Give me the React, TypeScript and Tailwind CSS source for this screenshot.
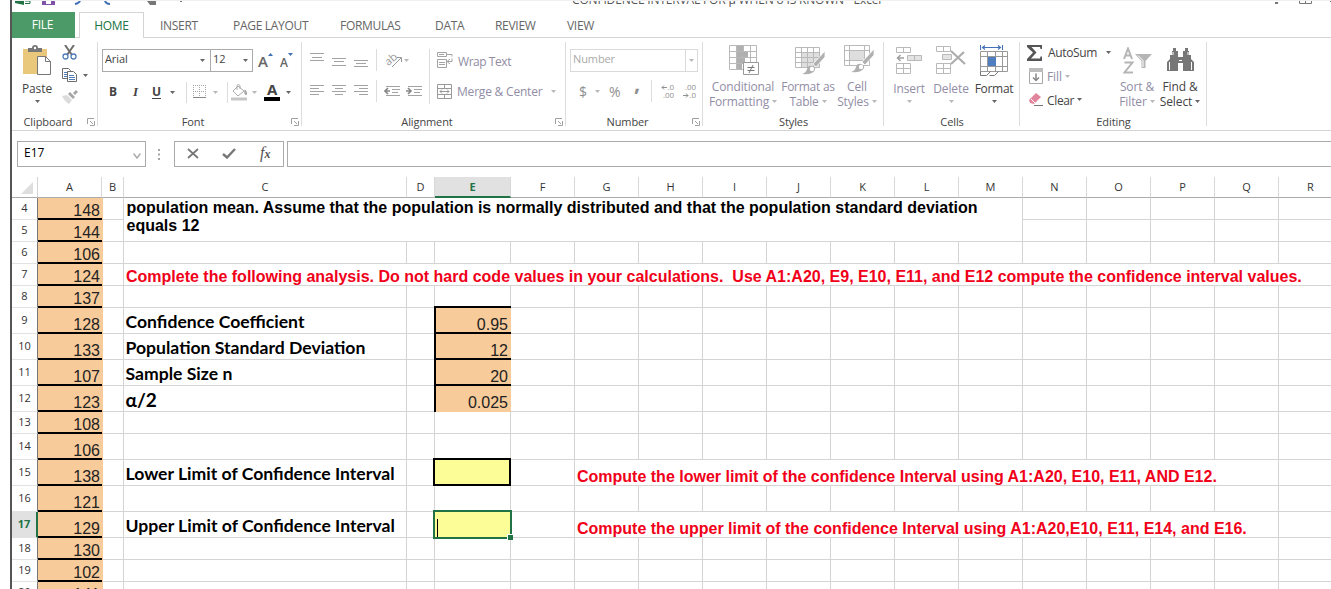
import React from 'react';
import clsx from 'clsx';

type Tone = 'dark' | 'muted';

const Arrow = ({ className, tone = 'dark' }: { className?: string; tone?: Tone }) => (
  <svg className={clsx('h-[3px] w-[5px] shrink-0', className)} viewBox="0 0 5 3">
    <path d="M0 0h5L2.5 3z" fill={tone === 'dark' ? '#666' : '#b8b8b8'} />
  </svg>
);

const Divider = ({ className }: { className?: string }) => (
  <div className={clsx('w-px shrink-0 bg-[#dcdcdc]', className)} />
);

const Launcher = () => (
  <svg className="absolute right-[3px] bottom-[4px] h-2 w-2" viewBox="0 0 8 8" fill="none" stroke="#a0a0a0">
    <path d="M.5 6V.5H7M3 3l3 3M7.5 3v4.5H3" />
  </svg>
);

// One ribbon section: tools on top, caption at the bottom
const Group = ({ title, className, titleClass, launcher, children }: {
  title: string;
  className: string;
  titleClass?: string;
  launcher?: boolean;
  children: React.ReactNode;
}) => (
  <section className={clsx('relative flex h-[92px] shrink-0 flex-col', className)}>
    <div className="h-[76px]">{children}</div>
    <div className={clsx('h-4 text-center text-[11px] leading-4 text-[#444]', titleClass)}>{title}</div>
    {launcher && <Launcher />}
    <div className="absolute top-1 right-0 h-[84px] w-px bg-[#dcdcdc]" />
  </section>
);

const Lines = ({ rows, className }: { rows: number[][]; className?: string }) => (
  <svg className={clsx('h-[14px] w-[14px] shrink-0', className)} viewBox="0 0 14 14">
    {rows.map(([x, y, w]) => (
      <rect key={y} x={x} y={y} width={w} height="1" fill="#a3a3a3" />
    ))}
  </svg>
);

const PasteIcon = () => (
  <svg className="h-[31px] w-[29px]" viewBox="0 0 29 31">
    <path d="M0 4h24v25H0z" fill="#e9c77b" />
    <path d="M5 7V3h4q0-3 3-3t3 3h4v4z" fill="#777" />
    <circle cx="12" cy="3" r="1.2" fill="#fff" />
    <path d="M14.500 11.500h8l5 5v13h-13z" fill="#fff" stroke="#777" />
    <path d="M22.500 11.500v5h5" fill="none" stroke="#777" />
  </svg>
);

const CutIcon = () => (
  <svg className="h-[15px] w-[15px]" viewBox="0 0 15 15" fill="none">
    <path d="M3 0l7 10M12 0L5 10" stroke="#6d6d6d" strokeWidth="2" />
    <circle cx="3.500" cy="11.500" r="2.500" stroke="#4f7db8" strokeWidth="1.300" />
    <circle cx="11.500" cy="11.500" r="2.500" stroke="#4f7db8" strokeWidth="1.300" />
  </svg>
);

const CopyIcon = () => (
  <svg className="h-[14px] w-[15px] shrink-0" viewBox="0 0 15 14" fill="#fff" stroke="#6d6d6d">
    <path d="M.5.5h6l2 2v8h-8z" />
    <path d="M2 4.500h4M2 6.500h3M2 8.500h3" stroke="#4f7db8" />
    <path d="M5.500 3.500h6l3 3v7h-9z" />
    <path d="M7 7.500h5M7 9.500h6M7 11.500h6" stroke="#4f7db8" />
  </svg>
);

const BrushIcon = () => (
  <svg className="h-[14px] w-[16px]" viewBox="0 0 16 14">
    <path d="M0 6l5-1 5 5-3 4q-4-2-7-8z" fill="#dcdcdc" />
    <path d="M6 4l2-2 5 5-2 2z" fill="#a5a5a5" />
    <path d="M11 3l3-3 2 2-3 3z" fill="#a5a5a5" />
  </svg>
);

const PaintOverlay = () => (
  <g>
    <path d="M30 6v6l-9 10-3-3z" fill="#b0b0b0" stroke="#fff" strokeWidth=".8" />
    <path d="M7 29q4-1 5-5 1-4 5-3 4 1 3 4-2 5-13 4z" fill="#b0b0b0" />
    <circle cx="17" cy="24" r="2.200" fill="#fff" />
  </g>
);

const ConditionalIcon = () => (
  <svg className="h-[31px] w-[31px]" viewBox="0 0 31 31">
    <path d="M.5.5h27v24H.5zM.5 6.500h27M.5 12.500h27M.5 18.500h27M7.500.5v24M14.500.5v24M21.500.5v24" fill="none" stroke="#b9b9b9" />
    <path d="M8 1h6v5H8zM8 7h11v5H8zM8 13h8v5H8zM8 19h5v5H8z" fill="#b0b0b0" />
    <path d="M14.500 17.500h15v12h-15z" fill="#fff" stroke="#999" />
    <path d="M18.500 22.500h7M18.500 25.500h7M24 20l-4 8" stroke="#777" fill="none" />
  </svg>
);

const TableIcon = () => (
  <svg className="h-[31px] w-[31px]" viewBox="0 0 31 31">
    <path d="M7 8h18v14H7z" fill="#dedede" />
    <path d="M.5 2.500h24v20H.5zM.5 7.500h24M.5 12.500h24M.5 17.500h24M6.500 2.500v20M12.500 2.500v20M18.500 2.500v20" fill="none" stroke="#b9b9b9" />
    <PaintOverlay />
  </svg>
);

const CellStylesIcon = () => (
  <svg className="h-[31px] w-[31px]" viewBox="0 0 31 31">
    <path d="M6 6h15v10H6z" fill="#dedede" />
    <path d="M.5.5h25v20H.5zM.5 5.500h25M.5 15.500h25M5.500.5v20M20.500.5v20" fill="none" stroke="#b9b9b9" />
    <g transform="translate(0 -2)"><PaintOverlay /></g>
  </svg>
);

const InsertIcon = () => (
  <svg className="h-[31px] w-[27px]" viewBox="0 0 27 31" fill="none" stroke="#b9b9b9">
    <path d="M.5 2.500h14v5H.5zM7.500 2.500v5M.5 18.500h14v10H.5zM7.500 18.500v10M.5 23.500h14" />
    <path d="M11.500 10.500h14v5h-14zM18.500 10.500v5" fill="#e4e4e4" />
    <path d="M2 13h6M4.500 10L1.500 13l3 3" stroke="#a0a0a0" strokeWidth="1.500" />
  </svg>
);

const DeleteIcon = () => (
  <svg className="h-[31px] w-[30px]" viewBox="0 0 30 31" fill="none" stroke="#b9b9b9">
    <path d="M.5 1.500h14v5H.5zM7.500 1.500v5M.5 18.500h14v10H.5zM7.500 18.500v10M.5 23.500h14" />
    <path d="M6.500 9.500h9v5h-9z" fill="#e4e4e4" />
    <path d="M15 6l14 13M28 7L15 19" stroke="#adadad" strokeWidth="2.200" />
  </svg>
);

const FormatIcon = () => (
  <svg className="h-[31px] w-[28px]" viewBox="0 0 28 31" fill="none">
    <path d="M.5 0v5M22.500 0v5M2 2.500h19M5 .5l-2.500 2L5 4.500M18 .5l2.500 2L18 4.500" stroke="#4472b4" strokeWidth="1.100" />
    <path d="M.5 6.500h27v20H.5zM.5 11.500h27M.5 21.500h27M7.500 6.500v20M15.500 6.500v20M22.500 6.500v20" stroke="#999" />
    <path d="M8 12h8v9H8z" fill="#4f7fbe" />
    <path d="M.5 26.500v4h6l4-4M9.500 30.500h5l4-4" stroke="#777" />
  </svg>
);

const SortIcon = () => (
  <svg className="h-[28px] w-[30px]" viewBox="0 0 30 28" fill="none" stroke="#b5b5b5" strokeWidth="2">
    <path d="M1 12L5 1.500 9 12M2.500 8.500h5M1.500 15.500h8L1.500 25.500h8.500" />
    <path d="M12 7h17l-6.500 7v7h-4v-7z" fill="#b5b5b5" stroke="none" />
    <path d="M15 8.500l5 5v6.500" stroke="#fff" strokeWidth="1" />
  </svg>
);

const FindIcon = () => (
  <svg className="h-[25px] w-[27px]" viewBox="0 0 27 25" fill="#777">
    <path d="M6 1h3v3h2v6h5V4h2V1h3v3h1v4h2v4l3 3v9H16v-8h-5v8H0v-9l3-3V8h2V4h1z" />
    <path d="M2.500 15v8M24.500 15v8M6 5v3M21 5v3M12 13.500h3" stroke="#fff" fill="none" />
  </svg>
);

// Big ribbon button with up to two lines of text
const BigButton = ({ icon, lines, className, tone = 'muted' }: {
  icon: React.ReactNode;
  lines: string[];
  className: string;
  tone?: Tone;
}) => (
  <div className={clsx('flex shrink-0 flex-col items-center pt-[7px] text-[12px]', className, tone === 'dark' ? 'text-[#444]' : 'text-[#918da5]')}>
    <div className="h-[34px]">{icon}</div>
    {lines.length === 2 ? (
      <>
        <div className="h-[15px] leading-[16px] whitespace-nowrap">{lines[0]}</div>
        <div className="flex h-[15px] items-center gap-[3px] leading-[15px] whitespace-nowrap">
          {lines[1]}
          <Arrow tone={tone} />
        </div>
      </>
    ) : (
      <>
        <div className="mt-0.5 h-[15px] leading-[16px]">{lines[0]}</div>
        <Arrow tone={tone} className="mt-[4px]" />
      </>
    )}
  </div>
);

const tabs = [
  { label: 'INSERT', className: 'ml-4 w-[73px]' },
  { label: 'PAGE LAYOUT', className: 'w-[107px]' },
  { label: 'FORMULAS', className: 'w-[95px]' },
  { label: 'DATA', className: 'w-[60px]' },
  { label: 'REVIEW', className: 'w-[72px]' },
  { label: 'VIEW', className: 'w-[60px]' },
];

const TitleBar = () => (
  <div className="flex h-3 overflow-hidden border-t border-[#f0f0f0]">
    <svg className="h-[5px] w-[170px] shrink-0" viewBox="0 0 170 5">
      <path d="M3 0h9v4L3 2z" fill="#217346" />
      <path d="M13 0h5v2.500h-5" fill="none" stroke="#217346" />
      <path d="M30 0h13v4H30z" fill="#8053a8" />
      <path d="M34 0h5v3h-5z" fill="#fff" />
      <path d="M68 0q-1 2-5 3M93 0q1 3 5 3" fill="none" stroke="#3f6fb5" strokeWidth="2" />
      <path d="M135 0h9v4h-6z" fill="#777" />
      <path d="M168 0h2v1h-2z" fill="#777" />
    </svg>
    <div className="-mt-[10px] ml-[390px] w-[640px] text-[12px] leading-[18px] tracking-[-0.17px] whitespace-nowrap text-[#555]">
      CONFIDENCE INTERVAL FOR μ WHEN δ IS KNOWN - Excel
    </div>
    <svg className="ml-[63px] h-[4px] w-[56px] shrink-0" viewBox="0 0 56 4">
      <path d="M0 1h3v2H0z" fill="#777" />
      <path d="M24.500 0v2.500h12V0M30.500 0v2.500" fill="none" stroke="#777" />
      <path d="M55 0h1v1h-1z" fill="#777" />
    </svg>
  </div>
);

const Tabs = () => (
  <nav className="flex h-[26px] text-[12px] leading-[27px] tracking-[-0.3px] text-[#666]">
    <div className="w-[63px] bg-[#4b9a68] pr-0.5 text-center leading-[26px] text-white">FILE</div>
    <div className="w-1 border-b border-[#d4d4d4]" />
    <div className="w-[65px] border-x border-t border-[#d4d4d4] text-center leading-[26px] text-[#217346]">HOME</div>
    <div className="flex grow border-b border-[#d4d4d4]">
      {tabs.map((tab) => (
        <span key={tab.label} className={tab.className}>{tab.label}</span>
      ))}
    </div>
  </nav>
);

const Ribbon = () => (
  <div className="flex h-[93px] border-b border-[#d4d4d4] tracking-[-0.1px]">
    <Group title="Clipboard" className="w-[86px]" titleClass="pr-3.5" launcher>
      <div className="flex">
        <div className="flex w-[50px] flex-col items-center pt-[7px]">
          <div className="h-[36px]"><PasteIcon /></div>
          <span className="text-[12px] leading-[15px] text-[#444]">Paste</span>
          <Arrow className="mt-1" />
        </div>
        <div className="flex flex-col gap-2 pt-[7px]">
          <CutIcon />
          <div className="flex items-center gap-1.5"><CopyIcon /><Arrow /></div>
          <BrushIcon />
        </div>
      </div>
    </Group>

    <Group title="Font" className="w-[204px]" titleClass="pr-3.5" launcher>
      <div className="flex h-[34px] pt-[11px] pl-1 text-[12px] text-[#444]">
        <div className="flex h-[23px] w-[109px] items-center justify-between border border-[#ababab] pr-[5px] pl-0.5">
          <span className="mb-1 text-[11px] leading-4">Arial</span><Arrow />
        </div>
        <div className="-ml-px flex h-[23px] w-[43px] items-center justify-between border border-[#ababab] pr-1 pl-0.5">
          <span className="mb-1 text-[11px] leading-4">12</span><Arrow />
        </div>
        <div className="ml-[5px] flex w-[22px] text-[15px] leading-[25px] font-semibold text-[#666]">A<svg className="mt-1 h-[3px] w-[5px]" viewBox="0 0 5 3"><path d="M0 3h5L2.500 0z" fill="#3f6fb5" /></svg></div>
        <div className="flex text-[12px] leading-[27px] font-semibold text-[#666]">A<svg className="mt-1 h-[3px] w-[5px]" viewBox="0 0 5 3"><path d="M0 0h5L2.500 3z" fill="#3f6fb5" /></svg></div>
      </div>
      <div className="mt-[9px] flex h-[22px] items-center text-[12px] font-bold text-[#444]">
        <span className="ml-[11px] w-[20px]">B</span>
        <span className="ml-[4px] w-[18px] font-['Liberation_Serif',serif] text-[13px] italic">I</span>
        <span className="ml-px w-[13px] underline underline-offset-2">U</span>
        <Arrow className="ml-[5px]" />
        <Divider className="ml-[11px] h-[21px]" />
        <svg className="ml-[6px] h-[14px] w-[14px]" viewBox="0 0 14 14" fill="none" stroke="#a8a8a8">
          <path d="M0 .5h13M0 6.500h13M.5 0v12M6.500 0v12M12.500 0v12" strokeDasharray="1 1" />
          <path d="M0 12.500h13" stroke="#888" />
        </svg>
        <Arrow tone="muted" className="ml-1.5" />
        <Divider className="ml-[9px] h-[21px]" />
        <svg className="ml-[3px] h-[17px] w-[17px]" viewBox="0 0 17 17" fill="none" stroke="#aaa">
          <path d="M7 2l6 5-6 5-5-5zM6 6V1.500q1-2 3 0V5" />
          <path d="M14 6q3 3 1 5-2-1-1-5z" fill="#aaa" />
          <path d="M0 13.500h16v3H0z" fill="#c6c6c6" stroke="none" />
        </svg>
        <Arrow tone="muted" className="ml-1" />
        <div className="ml-[7px] flex h-[17px] w-4 flex-col items-center border-b-4 border-black text-[15px] leading-[11px] font-bold">A</div>
        <Arrow className="ml-[6px]" />
      </div>
    </Group>

    <Group title="Alignment" className="w-[264px]" titleClass="pr-3.5" launcher>
      <div className="relative flex h-[75px] flex-col pl-2">
        <div className="mt-[11px] flex h-[22px] items-center">
          <Lines rows={[[0, 0, 14], [2, 4, 10], [0, 7, 14]]} />
          <Lines className="ml-2" rows={[[0, 5, 14], [2, 8, 10], [0, 12, 14]]} />
          <Lines className="ml-2" rows={[[0, 7, 14], [2, 10, 10], [0, 13, 14]]} />
          <Divider className="ml-2 h-[22px]" />
          <svg className="ml-[9px] h-[16px] w-[17px]" viewBox="0 0 17 16" fill="none" stroke="#999">
            <text x="-1" y="11" fontSize="11" fill="#999" stroke="none" transform="rotate(-40 5 8)">ab</text>
            <path d="M6 15L15 6M11 5.500h4.500V10" />
          </svg>
          <Arrow tone="muted" className="ml-px" />
          <svg className="ml-7 h-[16px] w-[16px]" viewBox="0 0 16 16" fill="none" stroke="#a3a3a3">
            <path d="M.5.5h9v4h-9zM2 2.500h5M.5 7.500h9v8h-9zM2 10.500h6M2 12.500h6M10 2.500h5v2M15 6.500v3h-4M13 7l-3 2.500 3 2.500" />
          </svg>
          <span className="mt-[3px] ml-[5px] text-[12px] tracking-[-0.45px] text-[#918da5]">Wrap Text</span>
        </div>
        <div className="mt-[9px] flex h-[22px] items-center">
          <Lines rows={[[0, 1, 14], [0, 4, 9], [0, 7, 14], [0, 10, 9]]} />
          <Lines className="ml-2" rows={[[0, 1, 14], [3, 4, 8], [0, 7, 14], [3, 10, 8]]} />
          <Lines className="ml-2" rows={[[0, 1, 14], [5, 4, 9], [0, 7, 14], [5, 10, 9]]} />
          <Divider className="ml-2 h-[22px]" />
          {['M6 6H1M4 3L1 6l3 3', 'M0 6h5M2 3l3 3-3 3'].map((d, i) => (
            <svg key={d} className={clsx('h-3 w-4', i === 0 ? 'ml-[7px]' : 'ml-[6px]')} viewBox="0 0 16 12" fill="none" stroke="#a3a3a3">
              <path d="M2 1.500h14M8 4.500h8M8 7.500h6M2 10.500h14" />
              <path d={d} stroke="#888" strokeWidth="1.600" />
            </svg>
          ))}
          <svg className="ml-[15px] h-[15px] w-[15px]" viewBox="0 0 15 15" fill="none" stroke="#999">
            <path d="M.5.5h14v14H.5zM.5 4.500h14M.5 10.500h14M7.500.5v4M7.500 10.500v4M3 7.500h9M5 5.500l-2 2 2 2M10 5.500l2 2-2 2" />
          </svg>
          <span className="mt-px ml-[5px] w-[92px] text-[12px] tracking-[-0.2px] whitespace-nowrap text-[#918da5]">Merge & Center</span>
          <Arrow tone="muted" className="ml-0.5" />
        </div>
        <Divider className="absolute top-[11px] left-[127px] h-[55px]" />
      </div>
    </Group>

    <Group title="Number" className="w-[137px]" titleClass="pr-3.5" launcher>
      <div className="pt-[11px] pl-1">
        <div className="flex h-[23px] w-[128px] justify-between border border-[#dadada] text-[11px] leading-[18px] text-[#aaa]">
          <span className="pl-0.5">Number</span>
          <div className="flex w-[12px] items-center justify-center border-l border-[#dadada]"><Arrow tone="muted" /></div>
        </div>
      </div>
      <div className="mt-2 flex h-[22px] items-center text-[14px] text-[#8f8f8f]">
        <span className="ml-[13px] w-[10px]">$</span>
        <Arrow tone="muted" className="ml-1.5" />
        <span className="ml-[9px] w-[14px]">%</span>
        <span className="ml-[11px] h-[22px] w-[6px] text-[22px] leading-[4px] font-bold">,</span>
        <Divider className="ml-[11px] h-[22px]" />
        <div className="ml-[7px] flex h-[16px] w-[15px] flex-col items-end text-[8px] leading-[8px]">
          <div className="flex items-center">
            <svg className="h-[5px] w-[7px]" viewBox="0 0 7 5" fill="none" stroke="#8f8f8f"><path d="M6 2.500H1M3 .5l-2 2 2 2" /></svg>
            .0
          </div>
          <div>.00</div>
        </div>
        <div className="ml-[7px] flex h-[16px] w-[15px] flex-col items-end text-[8px] leading-[8px]">
          <div>.00</div>
          <div className="flex items-center">
            <svg className="h-[5px] w-[7px]" viewBox="0 0 7 5" fill="none" stroke="#8f8f8f"><path d="M0 2.500h5M3 .5l2 2-2 2" /></svg>
            .0
          </div>
        </div>
      </div>
    </Group>

    <Group title="Styles" className="w-[181px]">
      <div className="flex pl-[5px]">
        <BigButton className="w-[70px] tracking-[-0.15px]" icon={<div className="pl-0.5"><ConditionalIcon /></div>} lines={['Conditional', 'Formatting']} />
        <BigButton className="w-[60px] tracking-[-0.25px]" icon={<div className="pl-1"><TableIcon /></div>} lines={['Format as', 'Table']} />
        <BigButton className="w-[38px]" icon={<div className="pl-1"><CellStylesIcon /></div>} lines={['Cell', 'Styles']} />
      </div>
    </Group>

    <Group title="Cells" className="w-[136px]">
      <div className="flex pl-[4px]">
        <BigButton className="w-[42px]" icon={<InsertIcon />} lines={['Insert']} />
        <BigButton className="w-[42px]" icon={<DeleteIcon />} lines={['Delete']} />
        <BigButton className="w-[44px] tracking-[-0.3px]" icon={<FormatIcon />} lines={['Format']} tone="dark" />
      </div>
    </Group>

    <Group title="Editing" className="w-[187px]">
      <div className="flex text-[12px] text-[#444]">
        <div className="flex w-[96px] flex-col pt-[3px] pl-[7px]">
          <div className="flex h-[23px] items-center">
            <svg className="h-4 w-[15px]" viewBox="0 0 15 16" fill="#555"><path d="M0 0h15v4h-1.500L13 2H4.500l5 5.500L4 13.500h9l.5-2H15V16H0v-2l6-6.500L0 2z" /></svg>
            <span className="mt-px ml-[6px] w-[52px] tracking-[-0.35px]">AutoSum</span>
            <Arrow className="ml-1.5" />
          </div>
          <div className="flex h-[24px] items-center text-[#918da5]">
            <svg className="ml-0.5 h-4 w-[14px]" viewBox="0 0 14 16" fill="none" stroke="#a8a8a8"><path d="M.5.5h13v15H.5z" /><path d="M0 0h14v4H0z" fill="#bdbdbd" stroke="none" /><path d="M7 5.500v7M4 9.500l3 3 3-3" stroke="#888" strokeWidth="1.500" /></svg>
            <span className="mt-0.5 ml-1">Fill</span>
            <Arrow tone="muted" className="ml-[3px]" />
          </div>
          <div className="flex h-[23px] items-center">
            <svg className="ml-0.5 h-[13px] w-[14px]" viewBox="0 0 14 13"><path d="M7 0l5 4-7 7-4-1-1-3z" fill="#e0859b" /><path d="M2 6l4 4" stroke="#fff" /><path d="M5 12.500h9" stroke="#777" /></svg>
            <span className="mt-0.5 ml-1 tracking-[-0.35px]">Clear</span>
            <Arrow className="ml-[3px]" />
          </div>
        </div>
        <BigButton className="w-[42px]" icon={<div className="pt-0.5 pl-0.5"><SortIcon /></div>} lines={['Sort &', 'Filter']} />
        <BigButton className="w-[44px]" icon={<div className="pt-0.5"><FindIcon /></div>} lines={['Find &', 'Select']} tone="dark" />
      </div>
    </Group>
  </div>
);

const FormulaBar = () => (
  <div className="flex h-[46px] pt-[10px] pl-[5px]">
    <div className="flex h-[26px] w-[129px] shrink-0 justify-between border border-[#ababab] pr-1 pl-1.5 text-[12px] leading-[22px] text-black">
      E17
      <svg className="mt-[11px] h-[6px] w-[8px]" viewBox="0 0 8 6" fill="none" stroke="#aaa" strokeWidth="1.500"><path d="M.5.5L4 5 7.500.5" /></svg>
    </div>
    <svg className="mt-2 ml-3 h-[11px] w-[2px]" viewBox="0 0 2 11" fill="#a5a5a5"><path d="M0 0h2v2H0zM0 4.500h2v2H0zM0 9h2v2H0z" /></svg>
    <div className="ml-[14px] flex h-[26px] w-[110px] shrink-0 items-center border border-[#ababab] pb-0.5">
      <svg className="ml-3 h-[11px] w-[12px]" viewBox="0 0 12 11" stroke="#777" strokeWidth="1.700"><path d="M1 1l10 9M11 1L1 10" /></svg>
      <svg className="ml-[23px] h-[11px] w-[14px]" viewBox="0 0 14 11" fill="none" stroke="#777" strokeWidth="2.400"><path d="M1 6l4 3.500L13 1" /></svg>
      <span className="ml-[24px] font-['Liberation_Serif',serif] text-[16px] leading-none text-[#555] italic">f<span className="text-[12px] font-bold">x</span></span>
    </div>
    <div className="ml-[3px] h-[26px] grow border border-r-0 border-[#ababab]" />
  </div>
);

type Cell = { text?: string; span?: string; kind?: 'label' | 'note' | 'input' | 'answer' | 'active' | 'merged' };
type Row = { n: number; a: string; tall?: boolean; cells: Cell[] };

const blank = (count: number): Cell[] => Array.from({ length: count }, () => ({}));

const rows: Row[] = [
  {
    n: 4, a: '148',
    cells: [{ kind: 'merged', span: 'col-span-11 row-span-2', text: 'population mean. Assume that the population is normally distributed and that the population standard deviation equals 12' }, ...blank(5)],
  },
  { n: 5, a: '144', cells: blank(5) },
  { n: 6, a: '106', cells: blank(16) },
  {
    n: 7, a: '124',
    cells: [{ kind: 'note', span: 'col-span-16', text: 'Complete the following analysis. Do not hard code values in your calculations.  Use A1:A20, E9, E10, E11, and E12 compute the confidence interval values.' }],
  },
  { n: 8, a: '137', cells: blank(16) },
  { n: 9, a: '128', tall: true, cells: [{ kind: 'label', text: 'Confidence Coefficient' }, {}, { kind: 'input', text: '0.95' }, ...blank(13)] },
  { n: 10, a: '133', tall: true, cells: [{ kind: 'label', text: 'Population Standard Deviation' }, {}, { kind: 'input', text: '12' }, ...blank(13)] },
  { n: 11, a: '107', tall: true, cells: [{ kind: 'label', text: 'Sample Size n' }, {}, { kind: 'input', text: '20' }, ...blank(13)] },
  { n: 12, a: '123', tall: true, cells: [{ kind: 'label', text: 'α/2' }, {}, { kind: 'input', text: '0.025' }, ...blank(13)] },
  { n: 13, a: '108', cells: blank(16) },
  { n: 14, a: '106', tall: true, cells: blank(16) },
  {
    n: 15, a: '138', tall: true,
    cells: [{ kind: 'label', text: 'Lower Limit of Confidence Interval' }, {}, { kind: 'answer' }, {}, { kind: 'note', span: 'col-span-11', text: 'Compute the lower limit of the confidence Interval using A1:A20, E10, E11, AND E12.' }, {}],
  },
  { n: 16, a: '121', tall: true, cells: blank(16) },
  {
    n: 17, a: '129', tall: true,
    cells: [{ kind: 'label', text: 'Upper Limit of Confidence Interval' }, {}, { kind: 'active' }, {}, { kind: 'note', span: 'col-span-11', text: 'Compute the upper limit of the confidence Interval using A1:A20,E10, E11, E14, and E16.' }, {}],
  },
  { n: 18, a: '130', cells: blank(16) },
  { n: 19, a: '102', cells: blank(16) },
  { n: 20, a: '141', cells: blank(16) },
];

const columns = 'ABCDEFGHIJKLMNOPQR'.split('');

const gridLine = 'border-r border-b border-[#d4d4d4]';

const SheetCell = ({ cell }: { cell: Cell }) => {
  switch (cell.kind) {
    case 'merged':
      return (
        <div className={clsx(gridLine, cell.span, 'pt-px pl-[2.5px] text-[16px] leading-[18px] font-bold text-black')}>
          <p className="w-[880px]">{cell.text}</p>
        </div>
      );
    case 'note':
      return (
        <div className={clsx(gridLine, cell.span, 'flex items-end pl-[2px] text-[16px] leading-[16px] font-bold whitespace-pre text-[#f00019]')}>
          {cell.text}
        </div>
      );
    case 'label':
      return (
        <div className={clsx(gridLine, "h-[26px] pt-px pl-[1.5px] font-['Lato',sans-serif] leading-[25px] font-bold whitespace-nowrap text-black", cell.text === 'α/2' ? 'text-[19px]' : 'text-[17.6px]')}>
          {cell.text}
        </div>
      );
    case 'input':
      return (
        <div className="relative flex items-end justify-end bg-[#f8cb9a] pr-[3px] text-[16px] leading-[18px] text-[#222]">
          {cell.text}
          <div className="absolute -top-0.5 bottom-0 -left-px w-0.5 bg-black" />
          <div className="absolute -top-0.5 right-0 -left-px h-0.5 bg-black" />
        </div>
      );
    case 'answer':
      return (
        <div className="relative">
          <div className="absolute -top-0.5 right-0 bottom-0 -left-0.5 border-2 border-black bg-[#fdfd98]" />
        </div>
      );
    case 'active':
      return (
        <div className="relative">
          <div className="absolute -top-0.5 -right-px bottom-[-1px] -left-0.5 z-10 border-2 border-[#217346] bg-[#fdfd98]">
            <div className="mt-[7px] ml-0.5 h-[18px] w-px bg-black" />
            <div className="absolute -right-[3px] -bottom-[3px] h-[6px] w-[6px] border-t border-l border-white bg-[#217346]" />
          </div>
        </div>
      );
    default:
      return <div className={gridLine} />;
  }
};

const Sheet = () => (
  <div className="grid w-[1331px] grid-cols-[26px_64px_22px_283px_28px_76px_repeat(13,64px)] font-['Liberation_Sans',Arial,sans-serif]">
    <div className="flex h-[21px] justify-end border-r border-b border-r-[#d4d4d4] border-b-[#ababab] pt-[5px] pr-1">
      <svg className="h-[12px] w-[12px]" viewBox="0 0 12 12"><path d="M12 0v12H0z" fill="#dedede" /></svg>
    </div>
    {columns.map((name) => (
      <div
        key={name}
        className={clsx(
          "h-[21px] border-r border-r-[#d8d8d8] text-center font-['Open_Sans',sans-serif] text-[11px] leading-[20px]",
          name === 'E' ? 'border-b-2 border-b-[#217346] bg-[#e1e1e1] font-bold text-[#217346]' : 'border-b border-b-[#ababab] text-[#333]',
        )}
      >
        {name}
      </div>
    ))}
    {rows.map((row) => (
      <React.Fragment key={row.n}>
        <div
          className={clsx(
            "border-b border-[#e2e2e2] text-center font-['Open_Sans',sans-serif] text-[11px]",
            row.tall ? 'h-[26px] leading-[24px]' : 'h-[22px] leading-[20px]',
            row.n === 17 ? 'border-r-2 border-r-[#217346] bg-[#e1e1e1] font-bold text-[#217346]' : 'border-r border-r-[#777] text-[#333]',
          )}
        >
          {row.n}
        </div>
        <div className="relative z-10 -mr-px flex items-end justify-end bg-[#f8cb9a] pr-[3px] text-[16px] leading-[18px] text-[#222]">
          {row.a}
          <div className="absolute right-px bottom-0 left-0 h-0.5 bg-black" />
        </div>
        <div className={gridLine} />
        {row.cells.map((cell, i) => (
          <SheetCell key={i} cell={cell} />
        ))}
      </React.Fragment>
    ))}
  </div>
);

export default function App() {
  return (
    <div className="h-[589px] w-[1331px] overflow-hidden bg-white pl-[10px] font-['Open_Sans','Noto_Sans',sans-serif]">
      <div className="h-full w-[1321px] overflow-hidden border-l-2 border-[#555]">
        <TitleBar />
        <Tabs />
        <Ribbon />
        <FormulaBar />
        <Sheet />
      </div>
    </div>
  );
}
